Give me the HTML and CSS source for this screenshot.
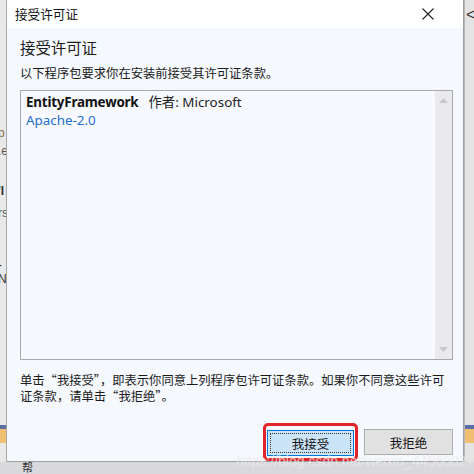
FILE: index.html
```html
<!DOCTYPE html>
<html lang="zh-CN">
<head>
<meta charset="utf-8">
<title>接受许可证</title>
<link rel="stylesheet" href="styles.css">
</head>
<body>
<div class="desktop">
  <div class="side-left">
    <span class="frag f1">p</span>
    <span class="frag f2">.e</span>
    <span class="frag f3">'I</span>
    <span class="frag f4">rs</span>
    <span class="frag f5">-N</span>
    <div class="band"></div>
  </div>
  <div class="dialog">
    <div class="titlebar">
      <span class="title">接受许可证</span>
      <svg class="close" width="12" height="12" viewBox="0 0 12 12"><path d="M0.5 0.5 L11.5 11.5 M11.5 0.5 L0.5 11.5" stroke="#222" stroke-width="1.1" fill="none"/></svg>
    </div>
    <div class="content">
      <h1 class="heading">接受许可证</h1>
      <p class="sub">以下程序包要求你在安装前接受其许可证条款。</p>
      <div class="listbox">
        <div class="items">
          <div class="pkg"><span class="name">EntityFramework</span><span class="author">作者: Microsoft</span></div>
          <div class="lic">Apache-2.0</div>
        </div>
        <div class="scrollbar">
          <svg width="9" height="5" viewBox="0 0 9 5"><path d="M0 5 L4.5 0 L9 5 Z" fill="#c8c8cc"/></svg>
          <svg width="9" height="5" viewBox="0 0 9 5"><path d="M0 0 L4.5 5 L9 0 Z" fill="#c8c8cc"/></svg>
        </div>
      </div>
      <p class="note">单击“我接受”，即表示你同意上列程序包许可证条款。如果你不同意这些许可证条款，请单击“我拒绝”。</p>
      <div class="buttons">
        <div class="hl"><button class="btn primary"><span class="focus">我接受</span></button></div>
        <button class="btn">我拒绝</button>
      </div>
    </div>
  </div>
  <div class="side-right">
    <span class="chev">&lt;</span>
    <div class="band"></div>
  </div>
  <div class="bottom">
    <span class="help">帮</span>
  </div>
  <div class="watermark">https://blog.csdn.net/weixin_44560027</div>
</div>
</body>
</html>
```

FILE: styles.css
```css
* { box-sizing: border-box; }
html, body { margin: 0; padding: 0; }
body {
  width: 474px;
  height: 474px;
  overflow: hidden;
  background: #d6d6d6;
  font-family: "Noto Sans CJK SC", "Noto Sans", sans-serif;
}
.desktop {
  position: relative;
  width: 474px;
  height: 474px;
  display: grid;
  grid-template-columns: 7px 457px 10px;
  grid-template-rows: 462px 12px;
}
.side-left {
  position: relative;
  background: #e9e9e9;
  border-right: 1px solid #a8a8a8;
  overflow: hidden;
}
.frag {
  position: absolute;
  left: -2px;
  font-family: "Liberation Sans", sans-serif;
  font-size: 12px;
  color: #555;
}
.f1 { top: 126px; color: #8a6a40; }
.f2 { top: 144px; }
.f3 { top: 184px; color: #333; font-weight: bold; }
.f4 { top: 206px; }
.f5 { top: 258px; color: #333; }
.side-left .band, .side-right .band {
  position: absolute;
  left: 0; right: 0;
  top: 425px;
  height: 18px;
  background: linear-gradient(#5b6ea8 0 20%, #f0c070 20% 100%);
}
.side-right {
  position: relative;
  background: #e4e4e4;
  border-left: 1px solid #b8b8b8;
  overflow: hidden;
}
.chev {
  position: absolute;
  left: 1px;
  top: 6px;
  font-family: "Liberation Sans", sans-serif;
  font-size: 16px;
  color: #333;
}
.bottom {
  grid-column: 1 / 4;
  background: #d9d9dd;
  position: relative;
}
.help {
  position: absolute;
  left: 22px;
  top: -3px;
  font-size: 11px;
  color: #333;
}
.dialog {
  display: flex;
  flex-direction: column;
  background: #f5f8fd;
  border-right: 1px solid #a0a0a0;
  border-bottom: 1px solid #a0a0a0;
  box-shadow: 1px 1px 3px rgba(0,0,0,0.25);
}
.titlebar {
  height: 32px;
  background: #ffffff;
  display: flex;
  align-items: center;
  justify-content: space-between;
  padding: 0 29px 0 8px;
}
.title {
  font-size: 12.6px;
  color: #111;
  margin-top: -1px;
}
.close { margin-top: 0; }
.content {
  flex: 1;
  display: flex;
  flex-direction: column;
  padding: 7px 10px 0 13px;
}
.heading {
  margin: 0;
  font-size: 15.4px;
  font-weight: normal;
  color: #1a1a1a;
  line-height: 24px;
}
.sub {
  margin: 5px 0 0;
  font-size: 12.3px;
  line-height: 18px;
  color: #1a1a1a;
}
.listbox {
  margin-top: 8px;
  width: 433px;
  height: 270px;
  border: 1px solid #a9a9a9;
  background: #f7f9fe;
  display: flex;
}
.items {
  flex: 1;
  padding: 2px 5px;
}
.pkg {
  display: flex;
  gap: 10px;
  align-items: baseline;
  line-height: 18px;
}
.name {
  font-family: "Noto Sans", sans-serif;
  font-weight: bold;
  font-size: 13.4px;
  color: #111;
  letter-spacing: -0.2px;
}
.author {
  font-family: "Noto Sans", "Noto Sans CJK SC", sans-serif;
  font-size: 13.4px;
  color: #222;
}
.lic {
  font-family: "Noto Sans", sans-serif;
  font-size: 13.4px;
  color: #1e6fcc;
  line-height: 18px;
}
.scrollbar {
  width: 17px;
  background: #e9e9ee;
  display: flex;
  flex-direction: column;
  align-items: center;
  justify-content: space-between;
  padding: 7px 0 7px;
}
.note {
  margin: 12px 0 0;
  width: 430px;
  font-size: 12.3px;
  line-height: 16px;
  color: #1a1a1a;
}
.buttons {
  margin-top: 19px;
  display: flex;
  align-items: center;
  justify-content: flex-end;
  gap: 6px;
  padding-right: 0;
}
.hl {
  border: 3px solid #e3232a;
  border-radius: 5px;
  padding: 4px 1px 2px 1px;
  width: 95px;
  height: 38px;
  display: flex;
  align-items: center;
}
.btn {
  width: 89px;
  height: 26px;
  background: #e1e1e1;
  border: 1px solid #adadad;
  font-family: "Noto Sans CJK SC", sans-serif;
  font-size: 12.5px;
  color: #111;
  padding: 0;
  margin: 0;
}
.primary {
  width: 87px;
  background: #cce4f7;
  border: 1px solid #0078d7;
  padding: 2px;
}
.focus {
  display: flex;
  align-items: center;
  justify-content: center;
  height: 100%;
  border: 1px dotted #333;
}
.watermark {
  position: absolute;
  left: 236px;
  top: 453px;
  font-family: "Liberation Sans", sans-serif;
  font-size: 14px;
  color: rgba(235,235,235,0.75);
  white-space: nowrap;
  pointer-events: none;
}
```
